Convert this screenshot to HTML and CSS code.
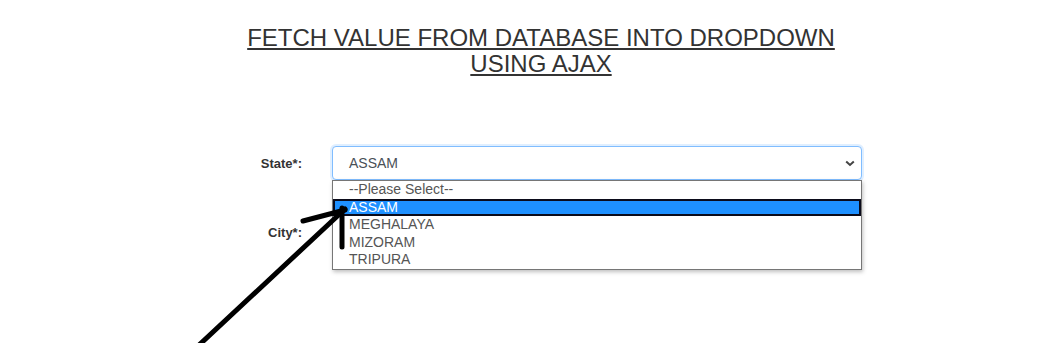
FILE: index.html
```html
<!DOCTYPE html>
<html lang="en">

<head>
    <meta charset="UTF-8">
    <meta name="viewport" content="width=device-width, initial-scale=1.0">
    <title>Fetch Value From Database Into Dropdown</title>
    <link rel="stylesheet" href="styles.css">
</head>

<body>
    <h2 class="page-title">FETCH VALUE FROM DATABASE INTO DROPDOWN<br>USING AJAX</h2>

    <form class="location-form">
        <div class="form-row">
            <label class="form-label">State*:</label>
            <div class="select-wrap">
                <div class="select-box">
                    <span>ASSAM</span>
                    <svg class="chevron" width="10" height="7" viewBox="0 0 10 7">
                        <path d="M1.2 1.5 L5 5 L8.8 1.5" fill="none" stroke="#444" stroke-width="2" />
                    </svg>
                </div>
                <ul class="option-list">
                    <li>--Please Select--</li>
                    <li class="selected">ASSAM</li>
                    <li>MEGHALAYA</li>
                    <li>MIZORAM</li>
                    <li>TRIPURA</li>
                </ul>
            </div>
        </div>

        <div class="form-row">
            <label class="form-label">City*:</label>
            <div class="select-wrap">
                <div class="select-box idle"></div>
            </div>
        </div>
    </form>

    <!-- hand drawn pointer on the screenshot -->
    <svg class="pointer-arrow" width="1058" height="343" viewBox="0 0 1058 343">
        <g stroke="#000" stroke-width="5" stroke-linecap="round" fill="none">
            <line x1="198" y1="346" x2="345" y2="209" />
            <line x1="303" y1="221" x2="345" y2="210" />
            <line x1="342" y1="208" x2="342" y2="247" />
        </g>
    </svg>
</body>

</html>
```

FILE: styles.css
```css
body {
    font-family: "Liberation Sans", Arial, sans-serif;
    background-color: #fff;
    color: #333;
    margin: 0;
    position: relative;
    min-height: 343px;
    overflow: hidden;
}

.page-title {
    margin: 25px 0 0;
    padding-left: 24px;
    font-size: 24px;
    font-weight: normal;
    line-height: 26px;
    text-align: center;
    text-decoration: underline;
    text-underline-offset: 2px;
    color: #333;
}

.location-form {
    width: 666px;
    margin: 69px auto 0;
    display: flex;
    flex-direction: column;
    gap: 35px;
}

.form-row {
    display: flex;
    align-items: center;
    gap: 30px;
}

.form-label {
    width: 106px;
    text-align: right;
    font-size: 13px;
    font-weight: bold;
    color: #333;
}

.select-wrap {
    position: relative;
    width: 530px;
}

.select-box {
    box-sizing: border-box;
    height: 34px;
    display: flex;
    align-items: center;
    justify-content: space-between;
    padding: 0 6px 0 16px;
    font-size: 14px;
    color: #495057;
    border: 1px solid #80bdff;
    border-radius: 4px;
    box-shadow: 0 0 0 2px rgba(0, 123, 255, 0.12);
    background: #fff;
}

.select-box.idle {
    border-color: #ced4da;
    box-shadow: none;
}

.option-list {
    position: absolute;
    top: 100%;
    left: 0;
    right: 0;
    z-index: 5;
    margin: 0;
    padding: 0;
    list-style: none;
    background: #fff;
    border: 1px solid #767676;
    box-shadow: 1px 2px 4px rgba(0, 0, 0, 0.25);
}

.option-list li {
    box-sizing: border-box;
    height: 17.6px;
    line-height: 17.6px;
    padding-left: 16px;
    font-size: 14px;
    color: #555;
}

.option-list li.selected {
    background-color: #1e90ff;
    color: #fff;
    border: 2px solid #0b0b1a;
    line-height: 13.6px;
    padding-left: 14px;
}

.pointer-arrow {
    position: absolute;
    top: 0;
    left: 0;
    z-index: 10;
    pointer-events: none;
}
```
